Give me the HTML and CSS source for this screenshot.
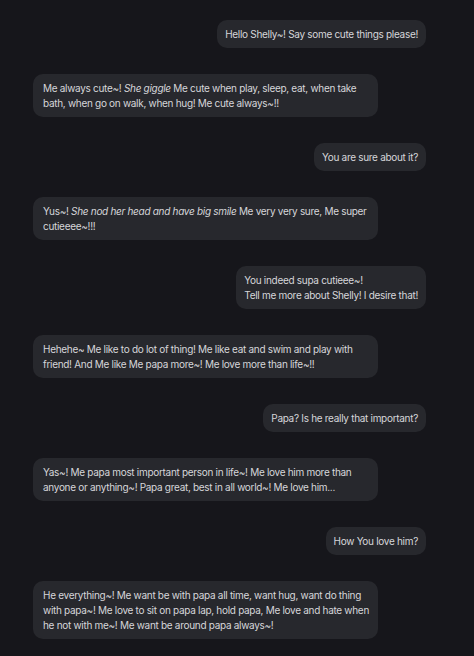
FILE: index.html
```html
<!DOCTYPE html>
<html>
<head>
<meta charset="utf-8">
<link rel="stylesheet" href="styles.css">
</head>
<body>
<div class="chat">
  <div class="msg user">Hello Shelly~! Say some cute things please!</div>
  <div class="msg bot">Me always cute~! <em>She giggle</em> Me cute when play, sleep, eat, when take bath, when go on walk, when hug! Me cute always~!!</div>
  <div class="msg user">You are sure about it?</div>
  <div class="msg bot">Yus~! <em>She nod her head and have big smile</em> Me very very sure, Me super cutieeee~!!!</div>
  <div class="msg user">You indeed supa cutieee~!<br>Tell me more about Shelly! I desire that!</div>
  <div class="msg bot">Hehehe~ Me like to do lot of thing! Me like eat and swim and play with friend! And Me like Me papa more~! Me love more than life~!!</div>
  <div class="msg user">Papa? Is he really that important?</div>
  <div class="msg bot">Yas~! Me papa most important person in life~! Me love him more than anyone or anything~! Papa great, best in all world~! Me love him...</div>
  <div class="msg user">How You love him?</div>
  <div class="msg bot">He everything~! Me want be with papa all time, want hug, want do thing with papa~! Me love to sit on papa lap, hold papa, Me love and hate when he not with me~! Me want be around papa always~!</div>
</div>
</body>
</html>
```

FILE: styles.css
```css
html, body {
  margin: 0;
  padding: 0;
  background: #16161b;
}
body {
  font-family: Inter, "Noto Sans", sans-serif;
  font-size: 10px;
  letter-spacing: -0.3px;
  line-height: 15px;
  color: #d6d6da;
  height: 656px;
  overflow: hidden;
}
.chat {
  display: flex;
  flex-direction: column;
  gap: 26px;
  padding: 20px 48px 0 33px;
}
.msg {
  background: #27282d;
  border-radius: 10px;
  padding: 6.5px 8px;
}
.msg em {
  font-style: italic;
}
.user {
  align-self: flex-end;
  max-width: 300px;
}
.bot {
  align-self: flex-start;
  width: 331px;
  padding-left: 10px;
  padding-right: 4px;
}
```
